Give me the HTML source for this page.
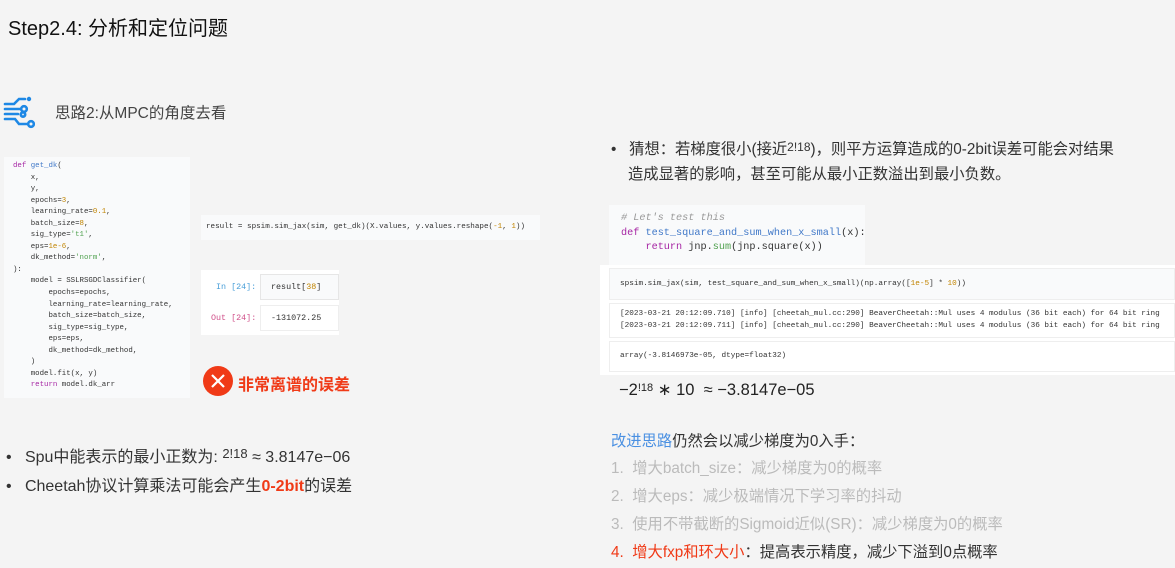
<!DOCTYPE html>
<html><head><meta charset="utf-8"><style>
body{margin:0;width:1175px;height:568px;background:#f4f4f4;position:relative;overflow:hidden;font-family:"Liberation Sans","Noto Sans CJK SC",sans-serif;}
.a{position:absolute;white-space:nowrap;}
.mono{font-family:"Liberation Mono","DejaVu Sans Mono",monospace;white-space:pre;}
.cell{position:absolute;background:#f9fafb;overflow:hidden;}
.k{color:#a626a4}.f{color:#4078c8}.n{color:#c18401}.s{color:#50a14f}
</style></head><body>
<div class="a" style="left:8px;top:12px;font-size:20px;color:#111">Step2.4: 分析和定位问题</div>
<svg class="a" style="left:3px;top:95px" width="32" height="34" viewBox="0 0 32 34" fill="none" stroke="#1e88e5" stroke-width="2.6" stroke-linecap="round">
<path d="M2 9h9l5-5h6"/><circle cx="26" cy="4" r="2.2" fill="#1e88e5" stroke="none"/>
<path d="M2 14h15"/><circle cx="21" cy="14" r="2.8"/>
<path d="M2 19h13"/><circle cx="20" cy="19.5" r="2.2"/>
<path d="M2 24h10l4 5h8"/><circle cx="28" cy="29" r="2.8"/>
</svg>
<div class="a" style="left:55px;top:101px;font-size:15.5px;color:#444">思路2:从MPC的角度去看</div>

<div class="cell mono" style="left:4px;top:157px;width:186px;height:241px;font-size:7.4px;line-height:11.55px;color:#333;padding:4px 0 0 9px;box-sizing:border-box"><span class="k">def</span> <span class="f">get_dk</span>(
    x,
    y,
    epochs=<span class="n">3</span>,
    learning_rate=<span class="n">0.1</span>,
    batch_size=<span class="n">8</span>,
    sig_type=<span class="s">'t1'</span>,
    eps=<span class="n">1e-6</span>,
    dk_method=<span class="s">'norm'</span>,
):
    model = SSLRSGDClassifier(
        epochs=epochs,
        learning_rate=learning_rate,
        batch_size=batch_size,
        sig_type=sig_type,
        eps=eps,
        dk_method=dk_method,
    )
    model.fit(x, y)
    <span class="k">return</span> model.dk_arr</div>

<div class="cell mono" style="left:201px;top:215px;width:339px;height:25px;font-size:7.6px;line-height:25px;color:#333;padding-left:5px;box-sizing:border-box">result = spsim.sim_jax(sim, get_dk)(X.values, y.values.reshape(<span class="n">-1</span>, <span class="n">1</span>))</div>
<div class="a" style="left:201px;top:270px;width:138px;height:65px;background:#fff"></div>
<div class="a mono" style="left:216px;top:282px;font-size:8.4px;color:#4a9fd8">In [24]:</div>
<div class="a mono" style="left:211px;top:313px;font-size:8.4px;color:#d0508a">Out [24]:</div>
<div class="cell mono" style="left:260px;top:274px;width:79px;height:26px;border:1px solid #e6e6e6;box-sizing:border-box;font-size:8.4px;line-height:24px;padding-left:10px;color:#333">result[<span class="n">38</span>]</div>
<div class="a mono" style="left:260px;top:305px;width:79px;height:26px;border:1px solid #eee;background:#fff;box-sizing:border-box;font-size:8.4px;line-height:24px;padding-left:10px;color:#333">-131072.25</div>
<div class="a" style="left:203px;top:366px;width:30px;height:30px;border-radius:50%;background:#f03a17"></div>
<svg class="a" style="left:203px;top:366px" width="30" height="30"><path d="M9 9l12 12M21 9L9 21" stroke="#fff" stroke-width="2.2"/></svg>
<div class="a" style="left:238px;top:371px;font-size:16px;font-weight:bold;color:#f03a17">非常离谱的误差</div>

<div class="a" style="left:6px;top:443px;font-size:16px;color:#333">•&nbsp;&nbsp; Spu中能表示的最小正数为: <span style="font-size:13px;vertical-align:4px">2!18</span> ≈ 3.8147e−06</div>
<div class="a" style="left:6px;top:472px;font-size:16px;color:#333">•&nbsp;&nbsp; Cheetah协议计算乘法可能会产生<b style="color:#f03a17">0-2bit</b>的误差</div>

<div class="a" style="left:611px;top:137px;font-size:15.3px;color:#333">•&nbsp;&nbsp; 猜想：若梯度很小(接近<span style="font-size:12px;vertical-align:3px">2!18</span>)，则平方运算造成的0-2bit误差可能会对结果</div>
<div class="a" style="left:628px;top:162px;font-size:15.3px;color:#333">造成显著的影响，甚至可能从最小正数溢出到最小负数。</div>

<div class="cell mono" style="left:609px;top:205px;width:256px;height:60px;font-size:10.2px;line-height:14.5px;color:#333;padding:7px 0 0 12px;box-sizing:border-box"><i style="color:#999"># Let's test this</i>
<span class="k">def</span> <span class="f">test_square_and_sum_when_x_small</span>(x):
    <span class="k">return</span> jnp.<span class="s">sum</span>(jnp.square(x))</div>
<div class="a" style="left:600px;top:265px;width:575px;height:110px;background:#fff"></div>
<div class="cell mono" style="left:609px;top:268px;width:566px;height:32px;border:1px solid #eee;box-sizing:border-box;font-size:7.7px;line-height:30px;padding-left:10px;color:#333">spsim.sim_jax(sim, test_square_and_sum_when_x_small)(np.array([<span class="n">1e-5</span>] * <span class="n">10</span>))</div>
<div class="a mono" style="left:609px;top:303px;width:566px;height:35px;border:1px solid #eee;box-sizing:border-box;font-size:7.7px;line-height:11.5px;padding:5px 0 0 10px;color:#333;overflow:hidden">[2023-03-21 20:12:09.710] [info] [cheetah_mul.cc:290] BeaverCheetah::Mul uses 4 modulus (36 bit each) for 64 bit ring
[2023-03-21 20:12:09.711] [info] [cheetah_mul.cc:290] BeaverCheetah::Mul uses 4 modulus (36 bit each) for 64 bit ring</div>
<div class="a mono" style="left:609px;top:341px;width:566px;height:31px;border:1px solid #eee;box-sizing:border-box;font-size:7.7px;line-height:29px;padding-left:10px;color:#333">array(-3.8146973e-05, dtype=float32)</div>
<div class="a" style="left:619px;top:380px;font-size:16.5px;color:#222">−2<span style="font-size:11px;vertical-align:4px">!18</span> ∗ 10 &nbsp;≈ −3.8147e−05</div>

<div class="a" style="left:611px;top:429px;font-size:15.3px;color:#333"><span style="color:#4a90e2">改进思路</span>仍然会以减少梯度为0入手：</div>
<div class="a" style="left:611px;top:456px;font-size:15.3px;color:#bbb">1.&nbsp; 增大batch_size：减少梯度为0的概率</div>
<div class="a" style="left:611px;top:484px;font-size:15.3px;color:#bbb">2.&nbsp; 增大eps：减少极端情况下学习率的抖动</div>
<div class="a" style="left:611px;top:512px;font-size:15.3px;color:#bbb">3.&nbsp; 使用不带截断的Sigmoid近似(SR)：减少梯度为0的概率</div>
<div class="a" style="left:611px;top:540px;font-size:15.3px;color:#333"><span style="color:#f03a17">4.&nbsp; 增大fxp和环大小</span>：提高表示精度，减少下溢到0点概率</div>
</body></html>
